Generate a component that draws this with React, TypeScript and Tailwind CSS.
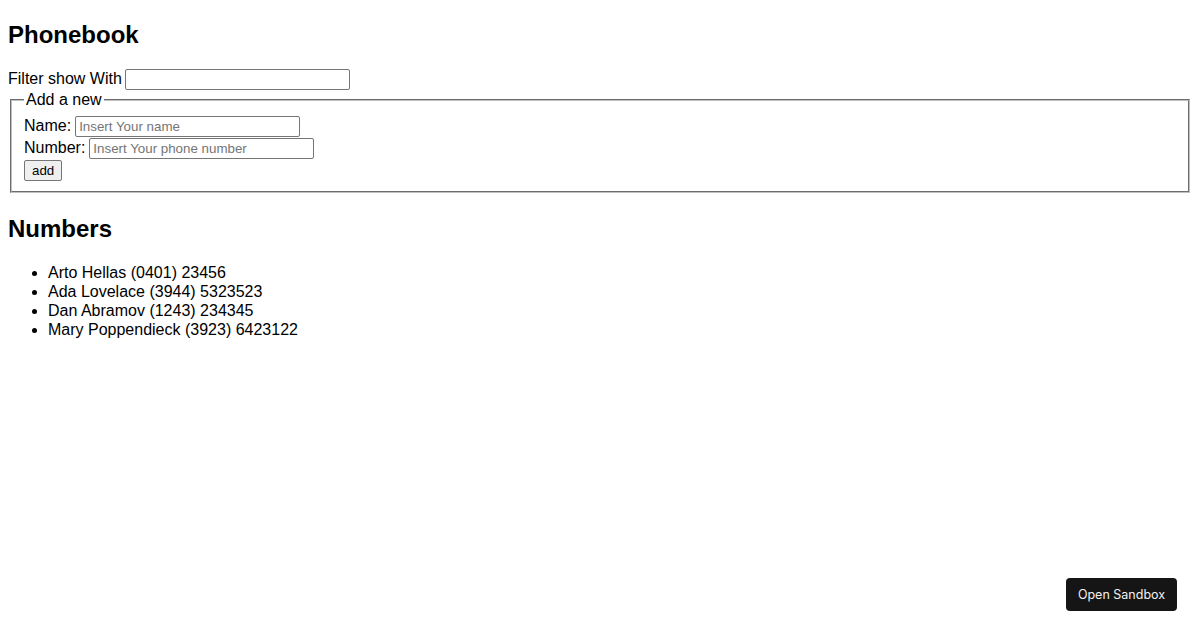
import { useState } from 'react';

interface Person {
  name: string;
  number: string;
}

const initialPersons: Person[] = [
  { name: 'Arto Hellas', number: '(0401) 23456' },
  { name: 'Ada Lovelace', number: '(3944) 5323523' },
  { name: 'Dan Abramov', number: '(1243) 234345' },
  { name: 'Mary Poppendieck', number: '(3923) 6423122' },
];

const inputClass =
  "w-[225px] h-[21px] px-[3px] py-[2px] text-[13.333px] leading-[normal] border border-[#767676] rounded-[2px] bg-white text-black placeholder:text-[#757575] outline-none";

export default function App() {
  const [persons, setPersons] = useState<Person[]>(initialPersons);
  const [filter, setFilter] = useState('');
  const [newName, setNewName] = useState('');
  const [newNumber, setNewNumber] = useState('');

  const addPerson = (e: React.FormEvent) => {
    e.preventDefault();
    if (!newName) return;
    setPersons(persons.concat({ name: newName, number: newNumber }));
    setNewName('');
    setNewNumber('');
  };

  const shown = persons.filter((p) =>
    p.name.toLowerCase().includes(filter.toLowerCase())
  );

  return (
    <div className="min-h-[630px] px-2 pb-2 bg-white text-black text-[16px] leading-[19px] font-['Liberation_Sans',Arial,sans-serif]">
      <h2 className="text-[24px] font-bold leading-[29px] pt-[19.92px] mb-[19.42px]">Phonebook</h2>
      <div className="flex items-end gap-[3px] h-[22px]">
        <span className="self-start mt-px">Filter show With</span>
        <input className={inputClass} value={filter} onChange={(e) => setFilter(e.target.value)} />
      </div>
      <form onSubmit={addPerson}>
        <fieldset className="mx-[2px] px-3 pt-[5.6px] pb-[10.5px] border-2 [border-style:groove] border-[#c0c0c0]">
          <legend className="px-[2px]">Add a new</legend>
          <div className="flex items-center gap-[4px] h-[22.4px]">
            <span className="-mt-px">Name:</span>
            <input
              className={inputClass}
              placeholder="Insert Your name"
              value={newName}
              onChange={(e) => setNewName(e.target.value)}
            />
          </div>
          <div className="flex items-center gap-[4px] h-[22.4px]">
            <span className="-mt-px">Number:</span>
            <input
              className={inputClass}
              placeholder="Insert Your phone number"
              value={newNumber}
              onChange={(e) => setNewNumber(e.target.value)}
            />
          </div>
          <div className="flex h-[21px]">
            <button
              type="submit"
              className="h-[21px] px-[7px] py-[2px] text-[13.333px] leading-[normal] border border-[#767676] rounded-[2px] bg-[#efefef] text-black"
            >
              add
            </button>
          </div>
        </fieldset>
      </form>
      <h2 className="text-[24px] font-bold leading-[29px] mt-[21px] mb-[19.92px]">Numbers</h2>
      <ul className="list-disc pl-10 my-4">
        {shown.map((p) => (
          <li key={p.name}>
            {p.name} {p.number}
          </li>
        ))}
      </ul>
      <button className="fixed right-[23px] bottom-[19px] w-[111px] h-[33px] rounded-[4px] bg-[#151515] text-[#f2f2f2] text-[12.5px] font-['Inter',sans-serif]">
        Open Sandbox
      </button>
    </div>
  );
}
